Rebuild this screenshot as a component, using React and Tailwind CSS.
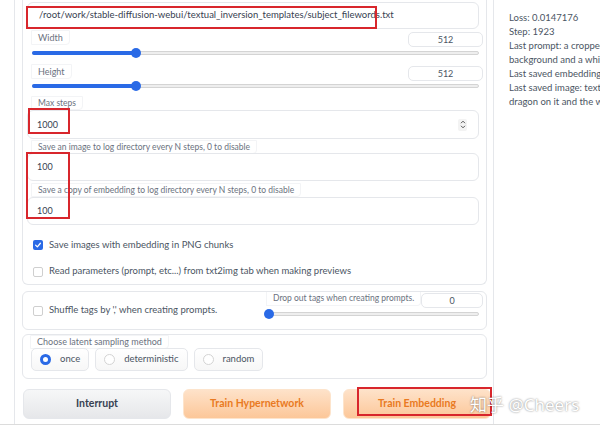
import React from 'react';

const FONT = { fontFamily: 'Lato, "Noto Sans", sans-serif' };

const Label = ({ children, className = '' }) => (
  <span
    className={`flex w-fit items-center h-[14px] px-[6px] border border-gray-100 rounded-br-[4px] bg-white text-[8.5px] text-[#6b7280] whitespace-nowrap ${className}`}
  >
    {children}
  </span>
);

const Slider = ({ pct }) => (
  <div className="relative h-[10px] flex items-center">
    <div className="w-full h-[4px] rounded-full bg-[#eeeeee] border border-[#d4d4d4]" />
    <div className="absolute left-0 h-[4px] rounded-full bg-[#2a6ae6]" style={{ width: pct }} />
    <div
      className="absolute w-[10px] h-[10px] rounded-full bg-[#2a6ae6] -translate-x-1/2"
      style={{ left: pct }}
    />
  </div>
);

const NumberBox = ({ value, className = '' }) => (
  <div
    className={`h-[15px] border border-gray-200 rounded-[5px] bg-white flex items-center justify-center text-[9px] text-[#4b5563] ${className}`}
  >
    {value}
  </div>
);

const Checkbox = ({ checked }) =>
  checked ? (
    <span className="w-[10px] h-[10px] rounded-[2px] bg-[#2a6ae6] flex items-center justify-center shrink-0">
      <svg width="8" height="8" viewBox="0 0 10 10">
        <path d="M2 5.2 L4.2 7.3 L8 2.8" fill="none" stroke="white" strokeWidth="1.6" strokeLinecap="round" strokeLinejoin="round" />
      </svg>
    </span>
  ) : (
    <span className="w-[10px] h-[10px] rounded-[2px] border border-[#cfcfcf] bg-white shrink-0" />
  );

const Radio = ({ label, checked }) => (
  <div className="h-[23px] px-[8px] flex items-center gap-[9px] border border-gray-200 rounded-[5px] bg-gradient-to-b from-white to-[#f7f7f7] text-[9.5px] text-[#4b5563]">
    {checked ? (
      <span className="w-[11px] h-[11px] rounded-full border-[3.5px] border-[#2a6ae6] bg-white" />
    ) : (
      <span className="w-[11px] h-[11px] rounded-full border border-[#d4d4d4] bg-white" />
    )}
    {label}
  </div>
);

const Red = ({ className }) => (
  <div className={`absolute border-2 border-[#d8262c] pointer-events-none ${className}`} />
);

export default function App() {
  const status = [
    'Loss: 0.0147176',
    'Step: 1923',
    'Last prompt: a cropped',
    'background and a white',
    'Last saved embedding:',
    'Last saved image: textual',
    'dragon on it and the wo',
  ];

  return (
    <div className="relative w-[600px] h-[428px] bg-white overflow-hidden" style={FONT}>
      <div className="flex h-[425px] border-b border-[#dcdcdc]">
        {/* left column */}
        <div className="ml-[14px] w-[479px] shrink-0 border-l border-gray-200 pl-[7px] pr-[2px] flex flex-col">
          {/* main settings group */}
          <div className="w-[465px] border-x border-b border-gray-200 rounded-b-[6px] pl-[4px] pr-[7px]">
            <div className="mt-[2px] h-[27px] border border-gray-200 rounded-[6px] flex items-center px-[11px] text-[9.5px] text-[#374151] whitespace-nowrap">
              /root/work/stable-diffusion-webui/textual_inversion_templates/subject_filewords.txt
            </div>

            {/* width */}
            <div className="flex justify-between items-start h-[17px] mt-[1px]">
              <Label className="ml-[4px] h-[15px] text-[9px]">Width</Label>
              <NumberBox value="512" className="mt-[2px] w-[75px] -mr-[4px]" />
            </div>
            <div className="mt-[1px] pl-[5px]">
              <Slider pct="23.2%" />
            </div>

            {/* height */}
            <div className="flex justify-between items-start h-[17px] mt-[6px]">
              <Label className="ml-[4px] h-[15px] text-[9px]">Height</Label>
              <NumberBox value="512" className="mt-[2px] w-[75px] -mr-[4px]" />
            </div>
            <div className="pl-[5px]">
              <Slider pct="23.2%" />
            </div>

            {/* max steps */}
            <Label className="mt-[5px] ml-[4px] h-[13px]">Max steps</Label>
            <div className="h-[29px] border border-gray-200 rounded-[6px] flex items-center justify-between pl-[9px] pr-[11px] text-[9px] text-[#374151]">
              <span>1000</span>
              <span className="w-[9px] h-[12px] bg-[#f3f3f3] rounded-[2px] flex items-center justify-center">
                <svg width="6" height="9" viewBox="0 0 6 9">
                  <path d="M1 3.2 L3 1.2 L5 3.2 M1 5.8 L3 7.8 L5 5.8" fill="none" stroke="#555" strokeWidth="1" />
                </svg>
              </span>
            </div>

            <Label className="mt-[1px] ml-[4px] h-[13px]">Save an image to log directory every N steps, 0 to disable</Label>
            <div className="-mt-[1px] h-[28px] border border-gray-200 rounded-[6px] flex items-center px-[9px] text-[9px] text-[#374151]">
              100
            </div>

            <Label className="mt-[2px] ml-[4px] h-[13px]">Save a copy of embedding to log directory every N steps, 0 to disable</Label>
            <div className="h-[28px] border border-gray-200 rounded-[6px] flex items-center px-[9px] text-[9px] text-[#374151]">
              100
            </div>

            <div className="mt-[6px] h-[28px] flex items-center gap-[6px] pl-[6px] text-[9.5px] text-[#4b5563]">
              <Checkbox checked />
              <span>Save images with embedding in PNG chunks</span>
            </div>
            <div className="h-[25px] flex items-center gap-[6px] pl-[6px] text-[9.5px] text-[#4b5563]">
              <Checkbox />
              <span>Read parameters (prompt, etc...) from txt2img tab when making previews</span>
            </div>
          </div>

          {/* shuffle / dropout group */}
          <div className="mt-[6px] w-[465px] h-[39px] border border-gray-200 rounded-[6px] flex items-center">
            <div className="w-[243px] flex items-center gap-[6px] pl-[10px] text-[9.5px] text-[#4b5563]">
              <Checkbox />
              <span>Shuffle tags by ',' when creating prompts.</span>
            </div>
            <div className="flex-1 self-start pr-[3px]">
              <div className="flex h-[15px]">
                <Label className="h-[14px] text-[8.5px] border-t-0 shrink-0">Drop out tags when creating prompts.</Label>
                <NumberBox value="0" className="mt-[1px] flex-1" />
              </div>
              <div className="mt-[2px] pl-[3px] pr-[4px]">
                <Slider pct="0%" />
              </div>
            </div>
          </div>

          {/* latent sampling group */}
          <div className="mt-[4px] w-[465px] border border-gray-200 rounded-[6px] pl-[8px] pb-[7px]">
            <Label className="ml-[-1px] h-[14px] text-[9px]">Choose latent sampling method</Label>
            <div className="-mt-[1px] flex gap-[6px]">
              <Radio label="once" checked />
              <Radio label="deterministic" />
              <Radio label="random" />
            </div>
          </div>

          {/* buttons */}
          <div className="mt-[10px] ml-[1px] grid grid-cols-3 gap-[12px] w-[468px]">
            <button className="h-[30px] rounded-[6px] border border-gray-200 bg-gradient-to-b from-[#f6f7f8] to-[#e6e7ea] text-[10.5px] font-bold text-[#374151]">
              Interrupt
            </button>
            <button className="h-[30px] rounded-[6px] border border-[#fde4cc] bg-gradient-to-b from-[#fee2c9] to-[#fcc799] text-[10.5px] font-bold text-[#e97a22]">
              Train Hypernetwork
            </button>
            <button className="h-[30px] rounded-[6px] border border-[#fde4cc] bg-gradient-to-b from-[#fee2c9] to-[#fcc799] text-[10.5px] font-bold text-[#e97a22]">
              Train Embedding
            </button>
          </div>
        </div>

        {/* right status panel */}
        <div className="flex-1 border-l border-gray-200 pl-[15px] pt-[11px] overflow-hidden">
          {status.map((line) => (
            <div key={line} className="leading-[14px] text-[9.5px] text-[#4b5563] whitespace-nowrap">
              {line}
            </div>
          ))}
        </div>
      </div>

      {/* annotation boxes */}
      <Red className="left-[26px] top-[6px] w-[351px] h-[23px]" />
      <Red className="left-[28px] top-[108px] w-[42px] h-[26px]" />
      <Red className="left-[26px] top-[152px] w-[44px] h-[67px]" />
      <Red className="left-[357px] top-[387px] w-[135px] h-[29px]" />

      {/* watermark */}
      <div
        className="absolute left-[470px] top-[392px] text-[17px] text-white whitespace-nowrap [text-shadow:0_0_2px_rgba(0,0,0,0.55)]"
        style={{ fontFamily: '"Noto Sans", "Noto Sans CJK SC", sans-serif' }}
      >
        知乎 @Cheers
      </div>
    </div>
  );
}
